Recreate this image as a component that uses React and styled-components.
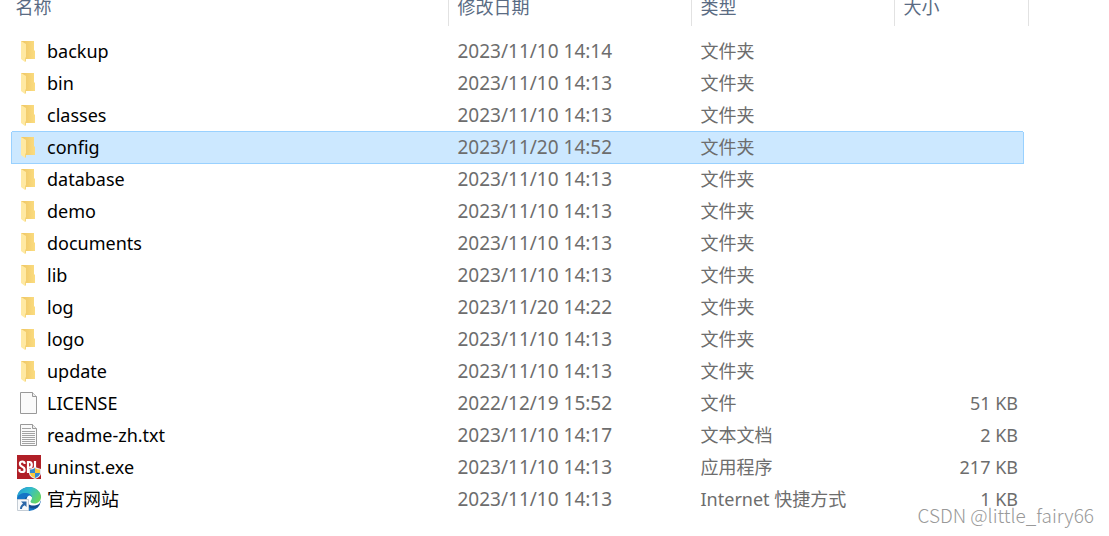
import styled, { createGlobalStyle } from "styled-components";

const GlobalStyle = createGlobalStyle`
  * {
    box-sizing: border-box;
  }
  body {
    margin: 0;
    background: #fff;
    font-family: "Noto Sans", "Noto Sans CJK SC", sans-serif;
  }
`;

const Explorer = styled.main`
  position: relative;
  min-height: 100vh;
  padding: 0 79px 0 11px;
  overflow: hidden;
`;

const FileTable = styled.table`
  width: 100%;
  table-layout: fixed;
  border-collapse: collapse;
`;

const Col = styled.col`
  width: ${(props) => props.$width || "auto"};
`;

const HeaderCell = styled.th`
  padding: 0 0 9px;
  text-align: left;
`;

const HeaderButton = styled.button`
  display: block;
  width: 100%;
  height: 26px;
  padding: 0 0 14px ${(props) => (props.$first ? "3px" : "9px")};
  border: 0;
  border-left: 1px solid ${(props) => (props.$first ? "transparent" : "#e2e2e2")};
  background: none;
  color: #5a6b83;
  font-family: "Noto Sans CJK SC", sans-serif;
  font-size: 18px;
  line-height: 12px;
  text-align: left;
`;

const HeaderEnd = styled.div`
  height: 26px;
  border-right: 1px solid #e2e2e2;
`;

const Row = styled.tr`
  height: 32px;

  td:not(:last-child) {
    background: ${(props) => (props.$selected ? "#cce8ff" : "none")};
    border-top: 1px solid ${(props) => (props.$selected ? "#99d1ff" : "transparent")};
    border-bottom: ${(props) => (props.$selected ? "1px solid #99d1ff" : "none")};
  }
  td:first-child {
    border-left: 1px solid ${(props) => (props.$selected ? "#99d1ff" : "transparent")};
  }
  td:nth-last-child(2) {
    border-right: 1px solid ${(props) => (props.$selected ? "#99d1ff" : "transparent")};
  }
`;

const Cell = styled.td`
  padding: 0 5px 2px 10px;
  color: #6d6d6d;
  font-size: ${(props) => (props.$large ? "19px" : "18px")};
  line-height: 24px;
  text-align: ${(props) => (props.$right ? "right" : "left")};
  white-space: nowrap;
`;

const NameCell = styled(Cell)`
  padding: 0 5px 2px;
  color: #000;
`;

const EdgeCell = styled.td`
  padding: 0;
`;

const Name = styled.div`
  display: flex;
  align-items: center;
  gap: 6px;
`;

const Icon = styled.svg`
  flex: none;
  width: 24px;
  height: 24px;
`;

const Watermark = styled.div`
  position: absolute;
  right: 15px;
  bottom: 9px;
  color: #999;
  font-family: "Noto Sans CJK SC", sans-serif;
  font-size: 19px;
  font-weight: 300;
  line-height: 24px;
`;

const FolderIcon = () => (
  <Icon viewBox="0 0 24 24" aria-hidden="true">
    <defs>
      <linearGradient id="folderBack" x1="0" y1="0" x2="1" y2="0">
        <stop offset="0" stopColor="#eec563" />
        <stop offset="1" stopColor="#fbdc80" />
      </linearGradient>
    </defs>
    <path d="M4 2h13v9l1 1v8H8L4 17z" fill="url(#folderBack)" />
    <path d="M4 2l5 3v14l-1 4-4-3z" fill="#ffe9a2" />
    <path d="M8 19l1-1v4l-1 1z" fill="#f5d67b" />
  </Icon>
);

const PageIcon = ({ lines }) => (
  <Icon viewBox="0 0 24 24" aria-hidden="true">
    <path d="M3.5 1.5h12l4 4v17h-16z" fill="#fafafa" stroke="#999" />
    <path d="M15.5 1.5v4h4" fill="#eee" stroke="#999" />
    {lines && (
      <path
        d="M5 5.5h9M5 8.5h13M5 10.5h13M5 12.5h13M5 14.5h13M5 16.5h13M5 18.5h13M5 20.5h13"
        stroke="#a3a3a3"
      />
    )}
  </Icon>
);

const InstallerIcon = () => (
  <Icon viewBox="0 0 24 24" aria-hidden="true">
    <path d="M0 0h24v24H0z" fill="#b01f27" />
    <path
      d="M7.500 9V8c0-2-4.500-2-4.500 0v1.500c0 2.500 4.500 2 4.500 4.500v1.500c0 2-5 2-5 0V14M11 18V7h1.500c3 0 3 5.500 0 5.500H11M18 6v9"
      fill="none"
      stroke="#fff"
      strokeWidth="2.200"
    />
    <path d="M18 12l6 2v4c0 3-3 5-6 6-3-1-6-3-6-6v-4z" fill="#e8eef4" />
    <path d="M18 13v5h-5v-3.500c2 0 3.500-.5 5-1.500z" fill="#3488d0" />
    <path d="M18 13c1.500 1 3 1.500 5 1.500V18h-5z" fill="#fac83c" />
    <path d="M13 18h5v5c-3-1-5-3-5-5z" fill="#fac83c" />
    <path d="M23 18h-5v5c3-1 5-3 5-5z" fill="#3488d0" />
  </Icon>
);

const EdgeIcon = () => (
  <Icon viewBox="0 0 24 24" aria-hidden="true">
    <defs>
      <linearGradient id="edgeTop" x1="0" y1="0" x2="1" y2="0.500">
        <stop offset="0" stopColor="#2397d4" />
        <stop offset="0.500" stopColor="#31bccd" />
        <stop offset="1" stopColor="#64d564" />
      </linearGradient>
    </defs>
    <circle cx="12" cy="12" r="12" fill="#1674c6" />
    <path
      d="M9 10c-1.500 2-1.500 5 0 7.500 2 3.500 7 5 11.500 3l2-2.500 1.500-6H14z"
      fill="#134d91"
    />
    <path
      d="M13 8.500c-2 0-3.500 2-3.500 4.500 0 4 4 6 8 5.500 2-.200 4-1 5-2L25 11H16z"
      fill="#fff"
    />
    <path
      d="M0 11C0 5 5 0 12 0c7 0 12 4.500 12 10 0 4-3 6.500-6.500 6.500-2.500 0-4-1-4-2s1.500-1.500 1.500-4C15 8 12 6 8.500 6 4 6 1 8 0 11z"
      fill="url(#edgeTop)"
    />
    <path d="M.5 12.500h11v11H.5z" fill="#f7f9fb" stroke="#c5cdd5" />
    <path d="M4 14.500h5.500V20L7.700 18.200C6 19 5 20 5 22H3c0-2.500 1-4 3-5.500z" fill="#2b67a8" />
  </Icon>
);

const icons = {
  folder: <FolderIcon />,
  file: <PageIcon />,
  text: <PageIcon lines />,
  installer: <InstallerIcon />,
  edge: <EdgeIcon />,
};

const files = [
  { name: "backup", date: "2023/11/10 14:14", type: "文件夹", icon: "folder" },
  { name: "bin", date: "2023/11/10 14:13", type: "文件夹", icon: "folder" },
  { name: "classes", date: "2023/11/10 14:13", type: "文件夹", icon: "folder" },
  { name: "config", date: "2023/11/20 14:52", type: "文件夹", icon: "folder", selected: true },
  { name: "database", date: "2023/11/10 14:13", type: "文件夹", icon: "folder" },
  { name: "demo", date: "2023/11/10 14:13", type: "文件夹", icon: "folder" },
  { name: "documents", date: "2023/11/10 14:13", type: "文件夹", icon: "folder" },
  { name: "lib", date: "2023/11/10 14:13", type: "文件夹", icon: "folder" },
  { name: "log", date: "2023/11/20 14:22", type: "文件夹", icon: "folder" },
  { name: "logo", date: "2023/11/10 14:13", type: "文件夹", icon: "folder" },
  { name: "update", date: "2023/11/10 14:13", type: "文件夹", icon: "folder" },
  { name: "LICENSE", date: "2022/12/19 15:52", type: "文件", size: "51 KB", icon: "file" },
  { name: "readme-zh.txt", date: "2023/11/10 14:17", type: "文本文档", size: "2 KB", icon: "text" },
  { name: "uninst.exe", date: "2023/11/10 14:13", type: "应用程序", size: "217 KB", icon: "installer" },
  { name: "官方网站", date: "2023/11/10 14:13", type: "Internet 快捷方式", size: "1 KB", icon: "edge" },
];

const columns = ["名称", "修改日期", "类型", "大小"];

export default function App() {
  return (
    <Explorer lang="zh-CN">
      <GlobalStyle />
      <FileTable>
        <colgroup>
          <Col />
          <Col $width="243px" />
          <Col $width="203px" />
          <Col $width="130px" />
          <Col $width="6px" />
        </colgroup>
        <thead>
          <tr>
            {columns.map((title, index) => (
              <HeaderCell key={title} scope="col">
                <HeaderButton type="button" $first={index === 0}>
                  {title}
                </HeaderButton>
              </HeaderCell>
            ))}
            <HeaderCell as="td">
              <HeaderEnd />
            </HeaderCell>
          </tr>
        </thead>
        <tbody>
          {files.map((file) => (
            <Row key={file.name} $selected={file.selected}>
              <NameCell>
                <Name>
                  {icons[file.icon]}
                  <span>{file.name}</span>
                </Name>
              </NameCell>
              <Cell $large>{file.date}</Cell>
              <Cell>{file.type}</Cell>
              <Cell $right>{file.size}</Cell>
              <EdgeCell />
            </Row>
          ))}
        </tbody>
      </FileTable>
      <Watermark>CSDN @little_fairy66</Watermark>
    </Explorer>
  );
}
